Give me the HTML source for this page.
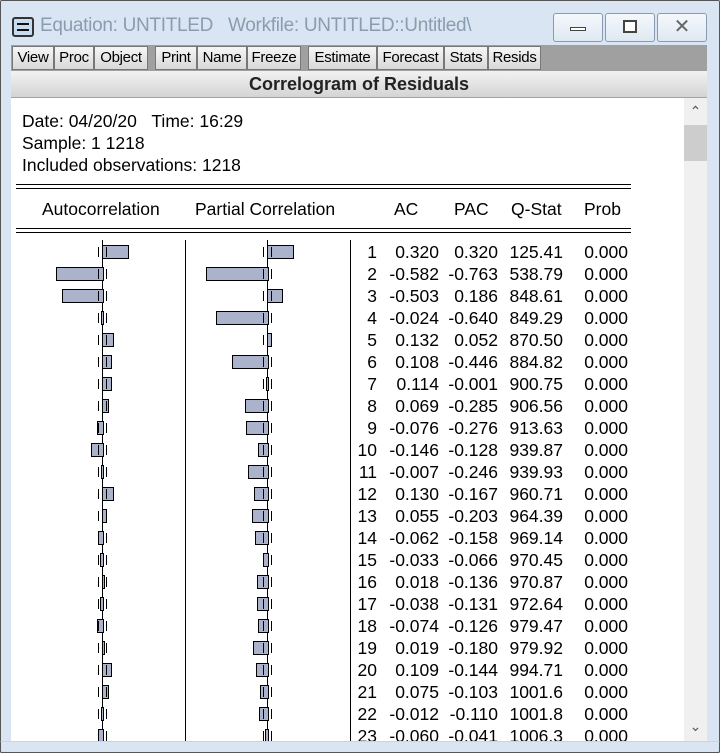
<!DOCTYPE html>
<html><head><meta charset="utf-8"><style>
*{margin:0;padding:0;box-sizing:border-box}
body{width:720px;height:753px;overflow:hidden;background:#dbe6f2;font-family:"Liberation Sans",Arial,sans-serif;position:relative}
.a{position:absolute}
#frame{left:0;top:0;width:720px;height:753px;border:1px solid #555;border-radius:2px;background:#d9e5f2}
.tb{top:13px;width:50px;height:29px;border:1px solid #8a9bb0;border-radius:3px;background:linear-gradient(#f4f8fc,#dfe8f2)}
.btn{top:46px;height:24px;border:1px solid #777;background:linear-gradient(#f6f6f6,#d8d8d8);font-size:15px;line-height:22px;text-align:center;color:#000;letter-spacing:-0.3px}
.t{font-size:17.5px;color:#000;white-space:nowrap}
.r{text-align:right;width:80px}
.bar{background:#aab2cc;border:1px solid #000;height:14px}
.d{width:1px;height:10px;background:#000}
</style></head><body>
<div class="a" id="frame"></div>
<div class="a" style="left:12px;top:17px;width:22px;height:20px;border:2px solid #333;border-radius:3px;background:#c8dcf0"></div>
<div class="a" style="left:17px;top:23px;width:12px;height:2px;background:#111"></div>
<div class="a" style="left:17px;top:29px;width:12px;height:2px;background:#111"></div>
<div class="a" style="left:40px;top:15px;font-size:19px;color:#8c9cb0;white-space:nowrap;letter-spacing:-0.3px">Equation: UNTITLED&nbsp;&nbsp;&nbsp;Workfile: UNTITLED::Untitled\</div>
<div class="a tb" style="left:553px"></div>
<div class="a tb" style="left:605px"></div>
<div class="a tb" style="left:657px"></div>
<div class="a" style="left:570px;top:27px;width:16px;height:4px;border:1px solid #444;background:#fff"></div>
<div class="a" style="left:623px;top:20px;width:14px;height:13px;border:2px solid #444;background:#fff"></div>
<div class="a" style="left:671px;top:13px;width:22px;font-size:20px;line-height:29px;text-align:center;color:#666">✕</div>
<div class="a" style="left:11px;top:45px;width:696px;height:26px;background:#a0a0a0"></div>
<div class="a btn" style="left:12px;width:42px">View</div>
<div class="a btn" style="left:54px;width:40px">Proc</div>
<div class="a btn" style="left:94px;width:54px">Object</div>
<div class="a btn" style="left:155px;width:42px">Print</div>
<div class="a btn" style="left:197px;width:50px">Name</div>
<div class="a btn" style="left:247px;width:54px">Freeze</div>
<div class="a btn" style="left:308px;width:69px">Estimate</div>
<div class="a btn" style="left:377px;width:67px">Forecast</div>
<div class="a btn" style="left:444px;width:44px">Stats</div>
<div class="a btn" style="left:488px;width:53px">Resids</div>
<div class="a" style="left:11px;top:71px;width:696px;height:27px;background:linear-gradient(#f2f2f2,#d4d4d4);border-bottom:1px solid #9ca0c4;font-size:18px;font-weight:bold;text-align:center;line-height:26px;color:#222">Correlogram of Residuals</div>
<div class="a" style="left:11px;top:98px;width:696px;height:643px;background:#fff;overflow:hidden">
<div class="a" style="left:673px;top:0;width:23px;height:643px;background:#f0f0f0"></div>
<div class="a" style="left:673px;top:27px;width:23px;height:36px;background:#cdcdcd"></div>
<div class="a" style="left:673px;top:5px;width:23px;text-align:center;font-size:14px;color:#555">&#8963;</div>
<div class="a" style="left:673px;top:620px;width:23px;text-align:center;font-size:14px;color:#555">&#8964;</div>
</div>
<div id="g"></div>
<script>
var h='';
function A(s){h+=s;}
A('<div class="a t" style="left:22px;top:111px">Date: 04/20/20&nbsp;&nbsp;&nbsp;Time: 16:29</div>');
A('<div class="a t" style="left:22px;top:133px">Sample: 1 1218</div>');
A('<div class="a t" style="left:22px;top:155px">Included observations: 1218</div>');
[184,188,228,232].forEach(function(y){A('<div class="a" style="left:16px;top:'+y+'px;width:615px;height:1px;background:#000"></div>');});
A('<div class="a t" style="left:42px;top:199px">Autocorrelation</div>');
A('<div class="a t" style="left:195px;top:199px">Partial Correlation</div>');
A('<div class="a t" style="left:394px;top:199px">AC</div>');
A('<div class="a t" style="left:454px;top:199px">PAC</div>');
A('<div class="a t" style="left:511px;top:199px">Q-Stat</div>');
A('<div class="a t" style="left:584px;top:199px">Prob</div>');
A('<div class="a" style="left:185px;top:240px;width:1px;height:501px;background:#000"></div>');
A('<div class="a" style="left:350px;top:240px;width:1px;height:501px;background:#000"></div>');
A('<div class="a" style="left:102px;top:240px;width:1px;height:501px;background:#000"></div>');
A('<div class="a" style="left:267px;top:240px;width:1px;height:501px;background:#000"></div>');
var d=[[0.320,0.320,'125.41'],[-0.582,-0.763,'538.79'],[-0.503,0.186,'848.61'],[-0.024,-0.640,'849.29'],[0.132,0.052,'870.50'],[0.108,-0.446,'884.82'],[0.114,-0.001,'900.75'],[0.069,-0.285,'906.56'],[-0.076,-0.276,'913.63'],[-0.146,-0.128,'939.87'],[-0.007,-0.246,'939.93'],[0.130,-0.167,'960.71'],[0.055,-0.203,'964.39'],[-0.062,-0.158,'969.14'],[-0.033,-0.066,'970.45'],[0.018,-0.136,'970.87'],[-0.038,-0.131,'972.64'],[-0.074,-0.126,'979.47'],[0.019,-0.180,'979.92'],[0.109,-0.144,'994.71'],[0.075,-0.103,'1001.6'],[-0.012,-0.110,'1001.8'],[-0.060,-0.041,'1006.3']];
function bar(ax,v,c){var w=Math.round(Math.abs(v)*81);if(w<2)w=2;var l=v>=0?ax:ax-w+1;
A('<div class="a bar" style="left:'+l+'px;top:'+(c-7)+'px;width:'+(w+1)+'px"></div>');
A('<div class="a d" style="left:'+(ax-4)+'px;top:'+(c-5)+'px"></div><div class="a d" style="left:'+(ax+4)+'px;top:'+(c-5)+'px"></div>');}
function f(v){return v.toFixed(3);}
for(var i=0;i<d.length;i++){var c=252+22*i,r=d[i],ty=c-10;
bar(102,r[0],c);bar(267,r[1],c);
A('<div class="a t r" style="left:297px;top:'+ty+'px">'+(i+1)+'</div>');
A('<div class="a t r" style="left:359px;top:'+ty+'px">'+f(r[0])+'</div>');
A('<div class="a t r" style="left:418px;top:'+ty+'px">'+f(r[1])+'</div>');
A('<div class="a t r" style="left:483px;top:'+ty+'px">'+r[2]+'</div>');
A('<div class="a t r" style="left:548px;top:'+ty+'px">0.000</div>');}
document.getElementById('g').innerHTML=h;
</script>
<div class="a" style="left:0;top:741px;width:720px;height:12px;background:#d9e5f2;border:1px solid #555;border-top:1px solid #c8d4e0;border-radius:0 0 2px 2px"></div>
</body></html>
